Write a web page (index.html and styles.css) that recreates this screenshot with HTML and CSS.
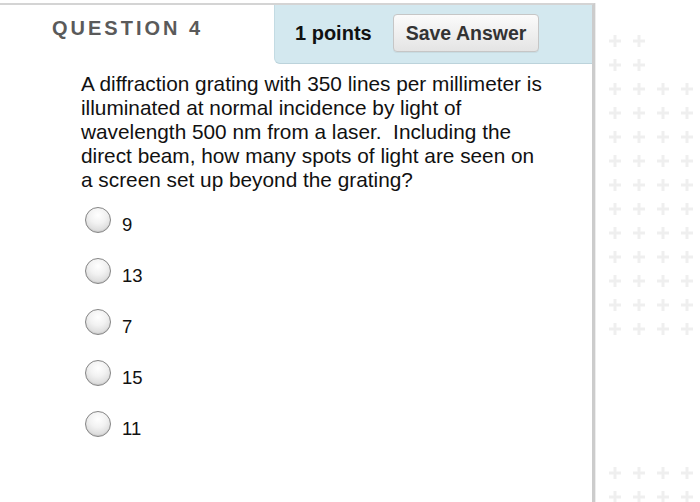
FILE: index.html
```html
<!DOCTYPE html>
<html>
<head>
<meta charset="utf-8">
<link rel="stylesheet" href="styles.css">
</head>
<body>
<div class="page">
  <div class="main">
    <div class="header">
      <div class="qtitle">QUESTION 4</div>
      <div class="pointsbox">
        <span class="points">1 points</span>
        <button class="save">Save Answer</button>
      </div>
    </div>
    <div class="content">
      <p class="qtext">A diffraction grating with 350 lines per millimeter is illuminated at normal incidence by light of wavelength 500 nm from a laser.&nbsp; Including the direct beam, how many spots of light are seen on a screen set up beyond the grating?</p>
      <ul class="options">
        <li class="opt"><span class="radio"></span><span class="label">9</span></li>
        <li class="opt"><span class="radio"></span><span class="label">13</span></li>
        <li class="opt"><span class="radio"></span><span class="label">7</span></li>
        <li class="opt"><span class="radio"></span><span class="label">15</span></li>
        <li class="opt"><span class="radio"></span><span class="label">11</span></li>
      </ul>
    </div>
  </div>
  <svg class="side" width="105" height="502" viewBox="0 0 105 502" aria-hidden="true">
    <defs>
      <pattern id="plus" x="8" y="29" width="24" height="24" patternUnits="userSpaceOnUse">
        <rect x="6" y="10.5" width="12" height="3" fill="#efefef"/>
        <rect x="10.5" y="6" width="3" height="12" fill="#efefef"/>
      </pattern>
    </defs>
    <rect x="8" y="29" width="48" height="48" fill="url(#plus)"/>
    <rect x="8" y="77" width="96" height="264" fill="url(#plus)"/>
    <rect x="8" y="461" width="96" height="48" fill="url(#plus)"/>
  </svg>
</div>
</body>
</html>
```

FILE: styles.css
```css
html, body {
  margin: 0;
  padding: 0;
  background: #ffffff;
}

body {
  font-family: "Liberation Sans", Arial, Helvetica, sans-serif;
  color: #111;
}

.page {
  display: flex;
  width: 700px;
  height: 502px;
  overflow: hidden;
}

.main {
  width: 592px;
  margin-top: 3px;
  border-top: 2px solid #d4d4d4;
  border-right: 3px solid #cccccc;
  box-shadow: 1px 0 0 #ededed;
  flex-shrink: 0;
  box-sizing: content-box;
}

.side {
  display: block;
  flex-shrink: 0;
}

.header {
  display: flex;
  justify-content: space-between;
  align-items: flex-start;
}

.qtitle {
  padding: 11px 0 0 52px;
  font-size: 20px;
  font-weight: bold;
  letter-spacing: 3px;
  color: #5a5a5a;
  line-height: 24px;
}

.pointsbox {
  width: 318px;
  height: 59px;
  box-sizing: border-box;
  background: #d3e8ef;
  border-left: 1px solid #c3dbe3;
  border-bottom: 1px solid #bcd3db;
  border-bottom-left-radius: 6px;
  display: flex;
  align-items: center;
  padding-left: 20px;
  padding-bottom: 2px;
}

.points {
  font-size: 20px;
  font-weight: bold;
  color: #111;
  width: 98px;
}

.save {
  width: 146px;
  height: 38px;
  font-family: "Liberation Sans", Arial, sans-serif;
  font-size: 19.5px;
  font-weight: bold;
  color: #333;
  background: linear-gradient(#fbfbfb, #e4e4e4);
  border: 1px solid #c6c6c6;
  border-radius: 4px;
  box-shadow: 0 1px 0 rgba(0,0,0,0.05);
  padding: 0;
}

.content {
  padding-left: 81px;
}

.qtext {
  width: 465px;
  margin: 8px 0 0 0;
  font-size: 20.8px;
  line-height: 24px;
  color: #111;
}

.options {
  list-style: none;
  margin: 2px 0 0 0;
  padding: 0 0 0 4px;
}

.opt {
  display: flex;
  align-items: center;
  height: 51px;
}

.radio {
  width: 24px;
  height: 24px;
  border-radius: 50%;
  border: 1px solid #858585;
  background: radial-gradient(circle at 50% 30%, #ffffff 0%, #f2f2f2 40%, #cdcdcd 100%);
  box-shadow: inset 0 -1px 1px rgba(0,0,0,0.08);
  flex-shrink: 0;
}

.label {
  margin-left: 11px;
  font-size: 18.5px;
  color: #111;
  padding-top: 10px;
}
```
